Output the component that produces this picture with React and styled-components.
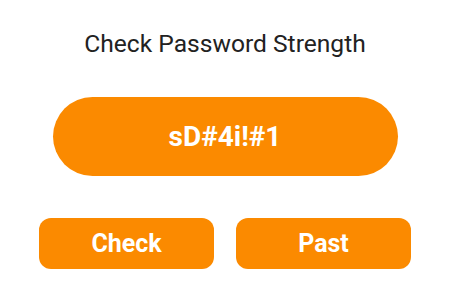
import React from 'react';
import styled, { createGlobalStyle } from 'styled-components';

const GlobalStyle = createGlobalStyle`
  html, body {
    margin: 0;
    padding: 0;
    background: #ffffff;
    font-family: Roboto, "Noto Sans", Arial, sans-serif;
  }
`;

const Screen = styled.div`
  width: 372px;
  margin-left: 39px;
  padding-top: 28px;
  display: flex;
  flex-direction: column;
  align-items: center;
`;

const Title = styled.h1`
  margin: 0;
  font-size: 24.6px;
  font-weight: 400;
  line-height: 32px;
  color: #222222;
`;

const PasswordPill = styled.div`
  margin-top: 37px;
  width: 345px;
  height: 79px;
  border-radius: 40px;
  background: #fb8a00;
  color: #ffffff;
  display: flex;
  align-items: center;
  justify-content: center;
  font-size: 28px;
  font-weight: 700;
`;

const ButtonRow = styled.div`
  margin-top: 42px;
  width: 100%;
  display: grid;
  grid-template-columns: 1fr 1fr;
  gap: 22px;
`;

const ActionButton = styled.button`
  height: 51px;
  border: none;
  border-radius: 12px;
  background: #fb8a00;
  color: #ffffff;
  font-family: inherit;
  font-size: 25px;
  font-weight: 700;
  cursor: pointer;
`;

export default function App() {
  return (
    <>
      <GlobalStyle />
      <Screen>
        <Title>Check Password Strength</Title>
        <PasswordPill>sD#4i!#1</PasswordPill>
        <ButtonRow>
          <ActionButton>Check</ActionButton>
          <ActionButton>Past</ActionButton>
        </ButtonRow>
      </Screen>
    </>
  );
}
